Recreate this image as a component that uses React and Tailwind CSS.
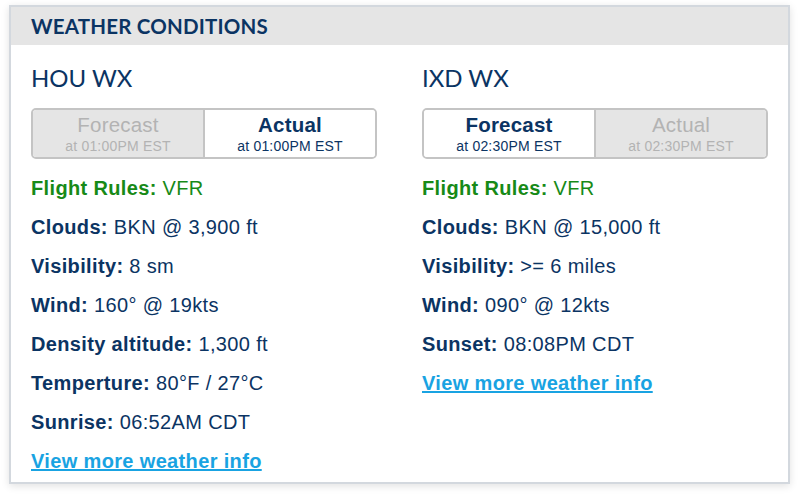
import React from "react";

const hou = {
  title: "HOU WX",
  active: "actual",
  time: "at 01:00PM EST",
  rows: [
    ["Clouds:", "BKN @ 3,900 ft"],
    ["Visibility:", "8 sm"],
    ["Wind:", "160° @ 19kts"],
    ["Density altitude:", "1,300 ft"],
    ["Temperture:", "80°F / 27°C"],
    ["Sunrise:", "06:52AM CDT"],
  ],
};

const ixd = {
  title: "IXD WX",
  active: "forecast",
  time: "at 02:30PM EST",
  rows: [
    ["Clouds:", "BKN @ 15,000 ft"],
    ["Visibility:", ">= 6 miles"],
    ["Wind:", "090° @ 12kts"],
    ["Sunset:", "08:08PM CDT"],
  ],
};

function ToggleHalf({ label, time, on, left }) {
  return (
    <div
      className={`flex-1 flex flex-col items-center justify-center pt-[1px] ${
        on ? "bg-white text-[#0b3463]" : "bg-[#e5e5e5] text-[#b3b3b3]"
      } ${left ? "border-r-2 border-[#c4c4c4]" : ""}`}
    >
      <span className={`text-[20.5px] leading-[24px] tracking-[0.2px] ${on ? "font-bold" : ""}`}>{label}</span>
      <span className="text-[14px] leading-[17px] mt-[1px] tracking-[0.2px]">{time}</span>
    </div>
  );
}

function Column({ data }) {
  return (
    <div className="flex flex-col">
      <h2 className="font-['Lato'] text-[24px] leading-[28px] text-[#0b3463] mt-[19px]">{data.title}</h2>
      <div className="flex h-[51px] mt-[16px] border-2 border-[#c4c4c4] rounded-[5px] overflow-hidden">
        <ToggleHalf label="Forecast" time={data.time} on={data.active === "forecast"} left />
        <ToggleHalf label="Actual" time={data.time} on={data.active === "actual"} />
      </div>
      <div className="mt-[10px] text-[20px] leading-[39px] tracking-[0.35px]">
        <div className="text-[#178a17]">
          <b>Flight Rules:</b> VFR
        </div>
        {data.rows.map(([k, v]) => (
          <div key={k} className="text-[#0b3463]">
            <b>{k}</b> {v}
          </div>
        ))}
        <a href="#" className="font-bold text-[#19a3e2] underline">
          View more weather info
        </a>
      </div>
    </div>
  );
}

export default function App() {
  return (
    <div className="w-[798px] h-[494px] bg-white pt-[5px] pl-[9px] font-['Liberation_Sans',Arial,sans-serif]">
      <div className="w-[781px] h-[479px] border-2 border-[#d3d8de] shadow-[0_2px_8px_rgba(0,0,0,0.12)] bg-white">
        <div className="h-[38px] bg-[#e5e5e5] flex items-center pl-[20px]">
          <h1 className="font-['Lato'] font-bold text-[20.5px] text-[#0b3463] tracking-[0.2px]">WEATHER CONDITIONS</h1>
        </div>
        <div className="grid grid-cols-2 gap-x-[45px] px-[20px]">
          <Column data={hou} />
          <Column data={ixd} />
        </div>
      </div>
    </div>
  );
}
